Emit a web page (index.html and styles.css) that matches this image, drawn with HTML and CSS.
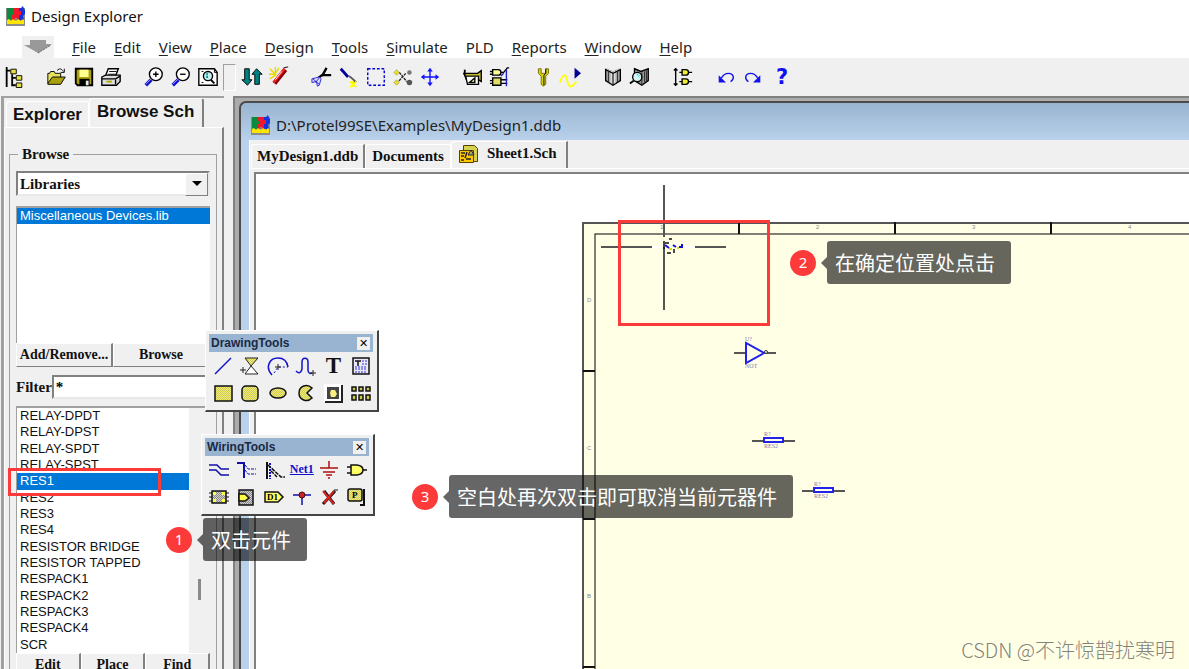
FILE: index.html
```
<!DOCTYPE html>
<html lang="zh-CN">

<head>
    <meta charset="UTF-8">
    <meta name="viewport" content="width=device-width, initial-scale=1.0">
    <title>Design Explorer</title>
    <link rel="stylesheet" href="styles.css">
</head>

<body>

    <!-- shared shapes -->
    <svg class="defs" aria-hidden="true">
        <pattern id="dither" width="2" height="2" patternUnits="userSpaceOnUse">
            <rect width="2" height="2" fill="#f2ee60" />
            <rect width="1" height="1" fill="#ccc870" />
            <rect x="1" y="1" width="1" height="1" fill="#ccc870" />
        </pattern>
        <pattern id="greydither" width="2" height="2" patternUnits="userSpaceOnUse">
            <rect width="2" height="2" fill="#d0d0d0" />
            <rect width="1" height="1" fill="#888" />
            <rect x="1" y="1" width="1" height="1" fill="#888" />
        </pattern>
        <symbol id="puzzle" viewBox="0 0 20 20">
            <path fill="#8c8c8c" d="M0 2h19v18H0z" />
            <path fill="#0a8a3c" d="M1 2h6v4h2v3H7v5H1z" />
            <path fill="#f01828" d="M7 2h6v3h2v4h-2v5h-2v-2H9v2H6V9h2V6H7z" />
            <path fill="#1432e0" d="M13 2h2l2-2 1 3 1 1v4l-2 2 1 4h-5V9h2V5h-2z" />
            <path fill="#ffe600" d="M1 18v-4l2-1 2 2 2-2 3 2 2-2 3 2 2-2 1 1v4z" />
        </symbol>
    </svg>

    <div class="app">
        <header class="titlebar">
            <svg class="logo"><use href="#puzzle" /></svg>
            <span>Design Explorer</span>
        </header>

        <nav class="menubar">
            <button class="menu-arrow" aria-label="System menu">
                <svg width="28" height="14" viewBox="0 0 28 14"><path fill="#999" d="M6 0h16v4h6L14 13 0 5h6z" /><path d="M14 13L27 5" stroke="#555" stroke-dasharray="2 1" /></svg>
            </button>
            <button><u>F</u>ile</button>
            <button><u>E</u>dit</button>
            <button><u>V</u>iew</button>
            <button><u>P</u>lace</button>
            <button><u>D</u>esign</button>
            <button><u>T</u>ools</button>
            <button><u>S</u>imulate</button>
            <button>PLD</button>
            <button><u>R</u>eports</button>
            <button><u>W</u>indow</button>
            <button><u>H</u>elp</button>
        </nav>

        <div class="toolbar">
            <div class="group">
                <button aria-label="Panel"><svg viewBox="0 0 24 24"><path d="M4 1v22M4 5h4M10 9v12h4M10 13h4" fill="none" stroke="#000" stroke-width="2" /><path fill="#e8e040" stroke="#000" d="M8.500 3.500h6v5h-6zM14.500 10.500h6v5h-6zM14.500 18.500h6v5h-6z" /></svg></button>
            </div>
            <div class="group">
                <button aria-label="Open"><svg viewBox="0 0 24 24"><path fill="#e8e060" stroke="#000" d="M2 19V8h2l1-2h4l1 2h6v4" /><path fill="#a8a010" stroke="#000" d="M2 19l5-7h14l-5 8H2z" /><path fill="none" stroke="#000" d="M12 5c3-3 5-2 7 1M20 3v4h-4" /></svg></button>
                <button aria-label="Save"><svg viewBox="0 0 24 24"><path fill="#a8a010" stroke="#000" stroke-width="2" d="M3 3h18v18H5l-2-2z" /><path fill="#ffff90" d="M7 4h10v8H7z" /><path d="M7 14h11v7H7z" /><path fill="#eee" d="M14 16h3v5h-3z" /></svg></button>
                <button aria-label="Print"><svg viewBox="0 0 24 24"><path fill="#fff" stroke="#000" stroke-width="1.500" d="M6 11l3-8h11l-3 8" /><path d="M10 6h8M9 9h8" stroke="#000" /><path fill="#ddd" stroke="#000" stroke-width="1.500" d="M2 12l4-2h16v7l-4 4H2z" /><path d="M2 14h15l5-3M17 15v5" fill="none" stroke="#000" stroke-width="1.500" /><path d="M7 17h6" stroke="#b0a800" stroke-width="2" /></svg></button>
            </div>
            <div class="group">
                <button aria-label="Zoom in"><svg viewBox="0 0 24 24"><circle cx="14" cy="9" r="7" fill="#fff" stroke="#000" stroke-width="1.500" /><path d="M11 9h6M14 6v6" stroke="#000" stroke-width="1.500" /><path d="M9 15l-6 6" stroke="#1010d0" stroke-width="4" /><path d="M9 14l-6 6" stroke="#aaf" /></svg></button>
                <button aria-label="Zoom out"><svg viewBox="0 0 24 24"><circle cx="14" cy="9" r="7" fill="#fff" stroke="#000" stroke-width="1.500" /><path d="M11 9h6" stroke="#000" stroke-width="1.500" /><path d="M9 15l-6 6" stroke="#1010d0" stroke-width="4" /><path d="M9 14l-6 6" stroke="#aaf" /></svg></button>
                <button aria-label="Fit document"><svg viewBox="0 0 24 24"><path fill="#fff" stroke="#000" stroke-width="1.500" d="M2 3h17l3 4v14H2z" /><path d="M19 3v4h3M5 6h2M5 18h2" fill="none" stroke="#000" /><circle cx="12" cy="11" r="5" fill="#c8eeee" stroke="#000" stroke-width="1.500" /><path d="M10 9h2M10 12h2" stroke="#099" stroke-width="2" /><path d="M15 15l4 4" stroke="#000" stroke-width="2" /></svg></button>
            </div>
            <span class="dock"></span>
            <div class="group">
                <button aria-label="Up down hierarchy"><svg viewBox="0 0 24 24"><path fill="#008080" stroke="#000" d="M4 3h5v12h3l-5 6-6-6h3zM15 20h5V9h3l-6-6-5 6h3z" /></svg></button>
                <button aria-label="Cross probe"><svg viewBox="0 0 24 24"><path d="M7 19L19 4" stroke="#800" stroke-width="5" /><path d="M6 18L18 3" stroke="#e22" stroke-width="3" /><path d="M8 15l7-9" stroke="#fff" /><path d="M17 2l5-1" stroke="#000" /><path d="M2 3l7 7M8 1v7M1 9h7M2 14l6-4M12 2l-4 6" stroke="#e8d800" stroke-width="1.500" /></svg></button>
            </div>
            <div class="group">
                <button aria-label="Cut"><svg viewBox="0 0 24 24"><path d="M17 2l-5 9M22 10H12L8 13" fill="none" stroke="#000" stroke-width="2.500" /><path fill="#dde" stroke="#22d" d="M1 14l8-2 2 2-2 7-2 1-1-5-5 1zM2 14l7 6M9 13l-4 5" /></svg></button>
                <button aria-label="Paste"><svg viewBox="0 0 24 24"><path d="M3 3l8 9" stroke="#009" stroke-width="3" /><path d="M12 11l4 3 3 3-3 2" fill="none" stroke="#555" stroke-width="2" /><path d="M13 17l7 6M20 17l-7 6M16 16v7" stroke="#ff0" stroke-width="2" /></svg></button>
                <button aria-label="Select inside area"><svg viewBox="0 0 24 24"><path fill="none" stroke="#00c" stroke-width="1.500" stroke-dasharray="3 2" d="M3 3h18v18H3z" /></svg></button>
                <button aria-label="Deselect"><svg viewBox="0 0 24 24"><path d="M8 7l8 10M15 8l-8 9" stroke="#222" stroke-width="1.500" stroke-dasharray="3 1" /><path fill="#e8e020" stroke="#776" stroke-width=".500" d="M2 7l3-3 3 3-3 3zM2 18l3-3 3 3-3 3z" /><circle cx="19" cy="7" r="2.500" fill="#777" /><circle cx="19" cy="18" r="3" fill="#555" /></svg></button>
                <button aria-label="Move"><svg viewBox="0 0 24 24"><path d="M12 4v16M4 12h16" stroke="#11f" stroke-width="1.500" /><path fill="#11f" d="M12 2l3 4H9zM12 22l3-4H9zM2 12l4-3v6zM22 12l-4-3v6z" /></svg></button>
            </div>
            <div class="group">
                <button aria-label="Drawing tools"><svg viewBox="0 0 24 24"><path fill="#c8c030" stroke="#000" stroke-width="1.500" d="M2 8h15l4-3v12l-3-2H5z" /><path fill="#fff" stroke="#000" stroke-width="1.500" d="M4 11h14v9H6z" /><path d="M3 4v6" stroke="#000" stroke-width="2" /><path d="M8 18l6-5v5z" fill="#ff6" stroke="#000" stroke-width="1.500" /></svg></button>
                <button aria-label="Wiring tools"><svg viewBox="0 0 24 24"><path d="M1 6h4M1 9h4M1 16h4M1 19h4M12 7h4l4-5h2M12 15h8M12 19h8" fill="none" stroke="#000" stroke-width="1.500" /><path d="M19 4v18M16 8l-3 3" stroke="#22c" stroke-width="1.500" /><path fill="#ff9" stroke="#000" stroke-width="1.500" d="M4 4h6c4 0 4 6 0 6H4z" /><path fill="url(#dither)" stroke="#000" stroke-width="1.500" d="M4 13h9v8H4z" /></svg></button>
            </div>
            <div class="group">
                <button aria-label="Setup"><svg viewBox="0 0 24 24"><path fill="#d8d000" stroke="#777000" d="M7 3v5l3 3v9l2 2 3-2v-9l3-3V3h-3v5h-5V3z" /><path d="M15 3v5l-2 2v11" fill="none" stroke="#000" /></svg></button>
                <button aria-label="Simulate"><svg viewBox="0 0 24 24"><path fill="none" stroke="#ff0" stroke-width="2" d="M1 18c4-12 7-8 8-2s4 10 10 1" /><path fill="#009" d="M17 2l7 6-7 6z" /></svg></button>
            </div>
            <div class="group">
                <button aria-label="Add library"><svg viewBox="0 0 24 24"><path fill="#aaa" stroke="#000" stroke-width="1.500" d="M4 4l8 4 8-4v12l-8 5-8-5z" /><path d="M7 6v12M12 8v13M17 6v12" stroke="#222" /><path d="M10 8v11M14 8v11" stroke="#fff" /><path d="M5 3l7 3 7-3" stroke="#777" fill="none" stroke-dasharray="1 1" /></svg></button>
                <button aria-label="Browse library"><svg viewBox="0 0 24 24"><path fill="#999" stroke="#000" stroke-width="1.500" d="M6 3l7 3 8-3v13l-7 5-8-5z" /><path d="M14 7v14M17 6v12M19 5v12" stroke="#222" /><circle cx="9" cy="12" r="5" fill="#d8f4f4" stroke="#000" stroke-width="1.500" /><path d="M5 16l-4 3" stroke="#000" stroke-width="2" /><path d="M9 9l3 3" stroke="#0cc" stroke-width="2" stroke-dasharray="1 1" /></svg></button>
            </div>
            <div class="group">
                <button aria-label="Increment part"><svg viewBox="0 0 24 24"><path d="M4 4v16M2 5l2-2 2 2M2 19l2 2 2-2M8 7h14M8 17h14" fill="none" stroke="#000" stroke-width="1.500" /><path fill="#ee3" stroke="#000" stroke-width="1.500" d="M11 4h4c4 0 4 6 0 6h-4zM11 14h4c4 0 4 6 0 6h-4z" /></svg></button>
            </div>
            <div class="group">
                <button aria-label="Undo"><svg viewBox="0 0 24 24"><path fill="none" stroke="#11e" stroke-width="1.500" d="M7 13c4-7 12-6 13-1 0 3-1 4-3 5" /><path fill="#11e" d="M4 10v8h8z" /></svg></button>
                <button aria-label="Redo"><svg viewBox="0 0 24 24"><path fill="none" stroke="#11e" stroke-width="1.500" d="M17 13C13 6 5 7 4 12c0 3 1 4 3 5" /><path fill="#11e" d="M20 10v8h-8z" /></svg></button>
                <button class="help" aria-label="Help">?</button>
            </div>
        </div>

        <main class="main">
            <aside class="sidebar">
                <div class="side-tabs">
                    <button>Explorer</button>
                    <button class="active">Browse Sch</button>
                </div>
                <div class="panel">
                    <fieldset>
                        <legend>Browse</legend>
                        <div class="combo">
                            <select aria-label="Browse">
                                <option>Libraries</option>
                            </select>
                        </div>
                        <ul class="listbox libraries">
                            <li class="selected">Miscellaneous Devices.lib</li>
                        </ul>
                        <div class="btn-row">
                            <button>Add/Remove...</button>
                            <button>Browse</button>
                        </div>
                        <div class="filter">
                            <label for="filter">Filter</label>
                            <input type="text" id="filter" value="*">
                        </div>
                        <div class="listbox parts">
                            <ul>
                                <li>RELAY-DPDT</li>
                                <li>RELAY-DPST</li>
                                <li>RELAY-SPDT</li>
                                <li>RELAY-SPST</li>
                                <li class="selected">RES1</li>
                                <li>RES2</li>
                                <li>RES3</li>
                                <li>RES4</li>
                                <li>RESISTOR BRIDGE</li>
                                <li>RESISTOR TAPPED</li>
                                <li>RESPACK1</li>
                                <li>RESPACK2</li>
                                <li>RESPACK3</li>
                                <li>RESPACK4</li>
                                <li>SCR</li>
                            </ul>
                            <div class="scroll"><span></span></div>
                        </div>
                        <div class="btn-row">
                            <button>Edit</button>
                            <button>Place</button>
                            <button>Find</button>
                        </div>
                    </fieldset>
                </div>
            </aside>

            <section class="mdi">
                <div class="child">
                    <div class="child-title">
                        <svg class="logo"><use href="#puzzle" /></svg>
                        <span>D:\Protel99SE\Examples\MyDesign1.ddb</span>
                    </div>
                    <div class="child-body">
                        <div class="doc-tabs">
                            <button>MyDesign1.ddb</button>
                            <button>Documents</button>
                            <button class="active">
                                <svg width="20" height="20" viewBox="0 0 20 20"><path fill="#d8d050" stroke="#554400" d="M4.500 1.500h11l3 3v13h-14z" /><path fill="#ffc800" stroke="#554400" d="M.500 6.500h14v12H.500z" /><path d="M2 9h4M2 12h3M7 15h5M2 16h3M8 8l-2 6" stroke="#222" stroke-width="1.500" /><path d="M9 11l3-5 3 5z" fill="#a8a878" stroke="#222" /></svg>
                                Sheet1.Sch
                            </button>
                        </div>
                        <div class="canvas">
                            <svg class="schematic" width="100%" height="100%">
                                <!-- sheet border -->
                                <rect x="327" y="49" width="3000" height="3000" fill="#ffffe6" stroke="#555" stroke-width="2" />
                                <rect x="339" y="60" width="3000" height="3000" fill="none" stroke="#000" stroke-width="1" />
                                <path class="ink" d="M483 48v12M639 48v12M795 48v12M327 197h12M327 345h12M327 493h12" />
                                <g class="ref">
                                    <text x="404" y="55">1</text>
                                    <text x="560" y="55">2</text>
                                    <text x="716" y="55">3</text>
                                    <text x="872" y="55">4</text>
                                    <text x="331" y="128">D</text>
                                    <text x="331" y="276">C</text>
                                    <text x="331" y="424">B</text>
                                </g>
                                <!-- placement cursor -->
                                <path class="ink soft" d="M408 11v52M408 73v63M345 73h51M439 73h31" />
                                <path d="M396 73h10M427 73h12" stroke="#fff" stroke-width="2" />
                                <path d="M408 67v8M409 69h4M413 65h3M411 79h4M418 75v4" stroke="#111" stroke-width="1.500" />
                                <path d="M409 71l4 3M417 71l3 2M423 73h4M426 70v4" stroke="#11d" stroke-width="2" />
                                <path d="M413 75h3M421 74h2" stroke="#dd0" stroke-width="2" />
                                <!-- NOT gate -->
                                <path class="ink soft" d="M478 179h12M511 179h9" />
                                <path class="part" d="M490 169v20l18-10z" />
                                <circle cx="510" cy="178" r="1.500" fill="none" stroke="#333" />
                                <g class="tag">
                                    <text x="489" y="167">U?</text>
                                    <text x="489" y="194">NOT</text>
                                </g>
                                <!-- resistors -->
                                <path class="ink soft" d="M496 267h12M527 267h12M546 317h12M577 317h12" />
                                <rect class="part" x="508" y="264" width="19" height="4" />
                                <rect class="part" x="558" y="314" width="19" height="4" />
                                <g class="tag">
                                    <text x="508" y="262">R?</text>
                                    <text x="508" y="274">RES2</text>
                                    <text x="558" y="312">R?</text>
                                    <text x="558" y="324">RES2</text>
                                </g>
                            </svg>
                        </div>
                    </div>
                </div>
            </section>
        </main>

        <!-- floating palettes -->
        <div class="palette drawing">
            <div class="palette-title">DrawingTools <button aria-label="Close">✕</button></div>
            <div class="palette-grid">
                <button aria-label="Line"><svg viewBox="0 0 22 22"><path d="M3 19L19 3" stroke="#11c" stroke-width="1.500" /></svg></button>
                <button aria-label="Polygon"><svg viewBox="0 0 22 22"><path fill="#fff" stroke="#222" d="M6 19l6-8 7 8z" /><path fill="url(#dither)" stroke="#222" d="M6 3h13l-7 8z" /><path d="M1 15h6M4 12v6" stroke="#222" /></svg></button>
                <button aria-label="Arc"><svg viewBox="0 0 22 22"><path fill="none" stroke="#11c" stroke-width="1.500" d="M5 20C-2 13 2 3 11 3c5 0 9 3 10 9" /><path d="M7 18l4-6h10" fill="none" stroke="#11c" stroke-dasharray="2 2" /><path d="M8 12h6M11 9v6" stroke="#222" /></svg></button>
                <button aria-label="Bezier"><svg viewBox="0 0 22 22"><path fill="none" stroke="#11c" stroke-width="1.500" d="M1 16c3 3 5 2 6-2V7c0-5 6-5 6 0v8c0 3 2 4 4 3" /><path d="M15 18h6M18 15v6" stroke="#222" /></svg></button>
                <button class="letter" aria-label="Text">T</button>
                <button aria-label="Text frame"><svg viewBox="0 0 22 22"><path fill="#e8e8f8" stroke="#111" stroke-width="1.500" d="M3 3h16v16H3z" /><path d="M12 6h5M12 9h5M5 12h12M5 14h12M5 17h12" stroke="#33c" stroke-dasharray="2 1" /><path d="M5 6h6M8 6v5" stroke="#111" stroke-width="1.500" /></svg></button>
                <button aria-label="Rectangle"><svg viewBox="0 0 22 22"><rect x="3" y="4" width="17" height="15" fill="url(#dither)" stroke="#111" stroke-width="1.500" /></svg></button>
                <button aria-label="Round rectangle"><svg viewBox="0 0 22 22"><rect x="3" y="4" width="16" height="15" rx="4" fill="url(#dither)" stroke="#111" stroke-width="1.500" /></svg></button>
                <button aria-label="Ellipse"><svg viewBox="0 0 22 22"><ellipse cx="11" cy="11" rx="8" ry="5" fill="url(#dither)" stroke="#111" stroke-width="1.500" /></svg></button>
                <button aria-label="Pie"><svg viewBox="0 0 22 22"><path fill="url(#dither)" stroke="#111" stroke-width="1.500" d="M17 6C12 1 4 4 4 11s8 10 13 5l-5-5z" /></svg></button>
                <button aria-label="Picture"><svg viewBox="0 0 22 22"><path fill="#fff" d="M2 2h18v18H2z" /><path d="M20 3v17H3" fill="none" stroke="#222" stroke-width="2" /><path fill="#444" d="M5 5h12v12H5z" /><path fill="#f8f080" d="M9 8h4l2 4-2 3H9l-1-4z" /></svg></button>
                <button aria-label="Array"><svg viewBox="0 0 22 22"><path fill="#cc4" stroke="#111" stroke-width="1.500" d="M2 5h4v4H2zM9 5h4v4H9zM16 5h4v4h-4zM2 13h4v5H2zM9 13h4v5H9zM16 13h4v5h-4z" /></svg></button>
            </div>
        </div>

        <div class="palette wiring">
            <div class="palette-title">WiringTools <button aria-label="Close">✕</button></div>
            <div class="palette-grid">
                <button aria-label="Wire"><svg viewBox="0 0 22 22"><path fill="none" stroke="#11a" stroke-width="1.500" d="M1 6h8l4 4h8M1 11h7l5 5h8" /></svg></button>
                <button aria-label="Bus"><svg viewBox="0 0 22 22"><path fill="none" stroke="#11a" stroke-width="2" d="M2 4h7v15" /><path fill="none" stroke="#11a" stroke-dasharray="3 1" d="M10 6l3 4h8M10 11l3 4h8" /></svg></button>
                <button aria-label="Bus entry"><svg viewBox="0 0 22 22"><path d="M4 3v17" stroke="#111" stroke-width="2" /><path d="M7 4v16" stroke="#11c" stroke-width="2" stroke-dasharray="2 1" /><path d="M5 6l13 12h4M8 12l6 6" fill="none" stroke="#111" stroke-width="1.500" stroke-dasharray="4 1" /></svg></button>
                <button class="net" aria-label="Net label">Net1</button>
                <button aria-label="Power port"><svg viewBox="0 0 22 22"><path fill="none" stroke="#a11" stroke-width="1.500" d="M11 2v7M2 9h18M5 13h12M8 16h6M10 19h2" /></svg></button>
                <button aria-label="Part"><svg viewBox="0 0 22 22"><path d="M1 8h5M1 14h5M15 11h6" stroke="#111" stroke-width="1.500" /><path fill="#ff6" stroke="#111" stroke-width="1.500" d="M5 6h6c8 1 8 9 0 10H5z" /></svg></button>
                <button aria-label="Sheet symbol"><svg viewBox="0 0 22 22"><path d="M1 7h20M1 11h20M1 15h20" stroke="#111" /><path fill="url(#greydither)" stroke="#111" stroke-width="1.500" d="M4 5h14v12H4z" /><path fill="#ff4" d="M5 6h3v3H5zM14 6h3v3h-3zM5 13h3v3H5zM14 13h3v3h-3z" /></svg></button>
                <button aria-label="Sheet entry"><svg viewBox="0 0 22 22"><path fill="url(#greydither)" stroke="#111" stroke-width="1.500" d="M4 4h14v15H4z" /><path fill="#ff4" stroke="#111" stroke-width="1.500" d="M4 8h6l4 4-4 3H4z" /></svg></button>
                <button aria-label="Port"><svg viewBox="0 0 22 22"><path fill="#ff6" stroke="#111" stroke-width="1.500" d="M2 6h13l5 5-5 5H2z" /><text class="port-text" x="4" y="14">D1</text></svg></button>
                <button aria-label="Junction"><svg viewBox="0 0 22 22"><path d="M2 9h18M11 9v10" stroke="#11a" stroke-width="1.500" /><circle cx="11" cy="9" r="3" fill="#c22" stroke="#411" /></svg></button>
                <button aria-label="No ERC"><svg viewBox="0 0 22 22"><path d="M6 5l10 13M17 5L5 18" stroke="#111" stroke-width="3" /><path d="M5 5l11 13M16 5L6 17" stroke="#d22" stroke-width="2" /><path d="M16 4h4" stroke="#111" /></svg></button>
                <button aria-label="PCB directive"><svg viewBox="0 0 22 22"><path d="M18 3v16h-4" fill="none" stroke="#111" stroke-width="2" /><rect x="2" y="3" width="14" height="12" rx="2" fill="url(#dither)" stroke="#111" stroke-width="1.500" /><text class="port-text" x="6" y="12">P</text></svg></button>
            </div>
        </div>

        <!-- tutorial notes -->
        <div class="mark mark-part"></div>
        <div class="mark mark-place"></div>
        <div class="note note1"><span class="num">1</span><span class="tip">双击元件</span></div>
        <div class="note note2"><span class="num">2</span><span class="tip">在确定位置处点击</span></div>
        <div class="note note3"><span class="num">3</span><span class="tip">空白处再次双击即可取消当前元器件</span></div>
        <div class="watermark">CSDN @不许惊鹊扰寒明</div>
    </div>

</body>

</html>
```
FILE: styles.css
```
* {
    box-sizing: border-box;
}

body {
    margin: 0;
    background: #f0f0f0;
    font-family: "Noto Sans", "Noto Sans CJK SC", sans-serif;
    color: #111;
}

button {
    margin: 0;
    padding: 0;
    border: none;
    background: none;
    font: inherit;
    color: inherit;
    white-space: nowrap;
}

ul {
    list-style: none;
    margin: 0;
    padding: 0;
}

.defs {
    position: absolute;
    width: 0;
    height: 0;
}

.app {
    position: relative;
    display: flex;
    flex-direction: column;
    height: 100vh;
    overflow: hidden;
}

.logo {
    width: 20px;
    height: 20px;
    flex: none;
}

/* title, menu, toolbar */
.titlebar {
    display: flex;
    align-items: center;
    gap: 5px;
    height: 31px;
    padding-left: 6px;
    background: #fff;
    font-size: 15px;
    flex: none;
}

.menubar {
    display: flex;
    align-items: center;
    gap: 18px;
    height: 27px;
    padding: 4px 0 0 22px;
    background: #fff;
    color: #222;
    font-size: 15px;
    line-height: 22px;
    flex: none;
}

.menubar u {
    text-underline-offset: 2px;
}

.menu-arrow {
    display: flex;
    align-items: center;
    justify-content: center;
    width: 32px;
    height: 22px;
    background: #f0f0f0;
}

.toolbar {
    display: flex;
    align-items: center;
    gap: 16px;
    height: 38px;
    flex: none;
}

.toolbar .group {
    display: flex;
}

.toolbar button {
    display: flex;
    align-items: center;
    justify-content: center;
    width: 27px;
    height: 28px;
}

.toolbar svg {
    width: 22px;
    height: 22px;
}

.toolbar .help {
    width: 32px;
    font: bold 21px "DejaVu Sans", sans-serif;
    color: #11e;
}

.dock {
    width: 13px;
    height: 27px;
    margin: 0 -14px;
    border-top: 1px solid #a0a0a0;
    border-left: 1px solid #a0a0a0;
    border-right: 1px solid #fff;
    border-bottom: 1px solid #fff;
}

.main {
    display: flex;
    flex: 1;
    min-height: 0;
}

/* left panel */
.sidebar {
    display: flex;
    flex-direction: column;
    width: 223px;
    margin: 0 9px 0 1px;
    border-top: 2px solid #a0a0a0;
    border-left: 3px solid #a0a0a0;
    flex: none;
}

.side-tabs {
    display: flex;
    align-items: flex-end;
    height: 29px;
    padding-left: 2px;
    font: bold 17px "Liberation Sans", sans-serif;
    flex: none;
}

.side-tabs button {
    height: 26px;
    padding: 0 6px;
    border: 1px solid #fff;
    border-bottom: none;
    border-radius: 3px 3px 0 0;
}

.side-tabs .active {
    height: 29px;
    padding: 0 8px 2px 7px;
    border-right: 2px solid #808080;
}

.panel {
    flex: 1;
    min-height: 0;
    padding: 18px 5px 0 4px;
    border-top: 1px solid #fff;
    border-left: 1px solid #fff;
    border-right: 2px solid #808080;
    font: bold 15px "Liberation Serif", serif;
}

fieldset {
    margin: 0;
    padding: 9px 6px 0 6px;
    border: 1px solid #a0a0a0;
    border-bottom: none;
    min-width: 0;
}

legend {
    margin-left: 2px;
    padding: 0 4px;
    line-height: 16px;
}

.combo {
    position: relative;
    border: 2px solid;
    border-color: #808080 #e8e8e8 #e8e8e8 #808080;
    background: #fff;
}

.combo select {
    display: block;
    appearance: none;
    width: 100%;
    height: 21px;
    padding: 0 2px;
    border: none;
    background: none;
    font: inherit;
    color: inherit;
}

.combo::before {
    content: "";
    position: absolute;
    top: 0;
    right: 0;
    width: 21px;
    height: 21px;
    border: 1px solid;
    border-color: #fff #808080 #808080 #fff;
    background: #f0f0f0;
}

.combo::after {
    content: "";
    position: absolute;
    top: 8px;
    right: 6px;
    border: 5px solid transparent;
    border-top-color: #000;
    border-bottom: none;
}

.listbox {
    background: #fff;
    border-top: 2px solid #a0a0a0;
    border-left: 1px solid #a0a0a0;
    font: 13px/16px "Liberation Sans", sans-serif;
}

.listbox li {
    padding-left: 3px;
    overflow: hidden;
}

.listbox .selected {
    background: #0078d7;
    color: #fff;
}

.libraries {
    height: 137px;
    margin-top: 10px;
}

.btn-row {
    display: flex;
}

.btn-row button {
    flex: 1 1 0;
    height: 24px;
    padding: 0 1px;
    border: 1px solid;
    border-color: #fff #808080 #808080 #fff;
    border-right-width: 2px;
    font-size: 14px;
}

.filter {
    display: flex;
    align-items: center;
    margin: 8px 0 7px;
}

.filter input {
    flex: 1;
    min-width: 0;
    height: 24px;
    padding: 0 2px;
    border: 2px solid;
    border-color: #808080 #e8e8e8 #e8e8e8 #808080;
    background: #fff;
    font: inherit;
}

.parts {
    display: flex;
    height: 247px;
}

.parts ul {
    display: grid;
    grid-auto-rows: 1fr;
    flex: 1;
}

.parts .scroll {
    width: 21px;
    padding: 171px 0 0 9px;
    background: #f0f0f0;
}

.parts .scroll span {
    display: block;
    width: 3px;
    height: 21px;
    background: #8a8a8a;
}

/* document window */
.mdi {
    display: flex;
    flex: 1;
    min-width: 0;
    padding: 3px 0 0 4px;
    border-top: 2px solid #808080;
    border-left: 2px solid #808080;
    background: #ababab;
}

.child {
    display: flex;
    flex-direction: column;
    flex: 1;
    min-width: 0;
    padding-left: 8px;
    border-top: 2px solid #4a4a4a;
    border-left: 2px solid #4a4a4a;
    border-radius: 7px 0 0 0;
    background: linear-gradient(#99b4d1, #b9d1ea 37px);
}

.child-title {
    display: flex;
    align-items: center;
    gap: 5px;
    height: 37px;
    padding: 7px 0 0 2px;
    color: #222;
    font-size: 15px;
    flex: none;
}

.child-body {
    display: flex;
    flex-direction: column;
    flex: 1;
    min-height: 0;
    padding: 2px 0 0 4px;
    border-left: 1px solid #fff;
    background: #f0f0f0;
}

.doc-tabs {
    display: flex;
    align-items: flex-end;
    height: 27px;
    margin: 0 0 3px -3px;
    border-bottom: 1px solid #fff;
    font: bold 15px "Liberation Serif", serif;
    flex: none;
}

.doc-tabs button {
    height: 24px;
    padding: 0 5px;
    border-top: 1px solid #fff;
    border-left: 1px solid #fff;
    border-right: 2px solid #808080;
    border-radius: 3px 0 0 0;
}

.doc-tabs button:nth-child(2) {
    padding: 0 6px;
    border-right: 1px solid #fff;
}

.doc-tabs .active {
    display: flex;
    align-items: center;
    gap: 8px;
    height: 27px;
    padding: 0 9px 3px 7px;
}

.canvas {
    flex: 1;
    min-height: 0;
    border-top: 2px solid #808080;
    border-left: 2px solid #808080;
    background: #fff;
    overflow: hidden;
}

.schematic {
    display: block;
}

.ink {
    fill: none;
    stroke: #111;
    stroke-width: 2px;
    shape-rendering: crispEdges;
}

.soft {
    stroke: #555;
}

.part {
    fill: none;
    stroke: #2222ee;
    stroke-width: 2px;
}

.ref {
    font: 6px "Liberation Sans", sans-serif;
    fill: #888;
}

.tag {
    font: 6px "Liberation Serif", serif;
    fill: #8080b0;
}

/* palettes */
.palette {
    position: absolute;
    width: 174px;
    padding: 3px 2px 4px 3px;
    background: #f0f0f0;
    border: 1px solid;
    border-color: #fff #444 #444 #fff;
    border-right-width: 2px;
    border-bottom-width: 2px;
}

.drawing {
    left: 205px;
    top: 330px;
}

.wiring {
    left: 201px;
    top: 434px;
}

.palette-title {
    display: flex;
    align-items: center;
    justify-content: space-between;
    height: 18px;
    margin-right: 2px;
    padding: 0 3px 0 2px;
    background: #99b4d1;
    font: bold 12px "Liberation Sans", sans-serif;
    color: #1a2a44;
}

.palette-title button {
    width: 13px;
    height: 13px;
    background: #f0f0f0;
    font: bold 11px/13px "DejaVu Sans", sans-serif;
    color: #000;
}

.palette-grid {
    display: grid;
    grid-template-columns: repeat(6, 1fr);
    grid-auto-rows: 27px;
}

.palette-grid button {
    display: flex;
    align-items: center;
    justify-content: center;
    min-width: 0;
}

.palette-grid svg {
    width: 22px;
    height: 22px;
}

.palette-grid .letter {
    font: bold 23px "Liberation Serif", serif;
}

.palette-grid .net {
    font: bold 12px "Liberation Serif", serif;
    color: #1111cc;
    text-decoration: underline;
}

.port-text {
    font: bold 9px "Liberation Serif", serif;
}

/* notes */
.mark {
    position: absolute;
    border: 3px solid #fc3a3a;
}

.mark-part {
    left: 8px;
    top: 468px;
    width: 153px;
    height: 28px;
}

.mark-place {
    left: 618px;
    top: 220px;
    width: 152px;
    height: 106px;
}

.note {
    position: absolute;
    display: flex;
    align-items: center;
    gap: 11px;
    color: #fff;
}

.note1 {
    left: 166px;
    top: 518px;
}

.note2 {
    left: 790px;
    top: 241px;
}

.note3 {
    left: 412px;
    top: 475px;
}

.num {
    width: 26px;
    height: 26px;
    border-radius: 50%;
    background: #fc3a3a;
    font-size: 15px;
    line-height: 24px;
    text-align: center;
}

.tip {
    position: relative;
    padding: 0 16px 0 8px;
    border-radius: 3px;
    background: rgba(0, 0, 0, 0.6);
    font: 20px/43px "Noto Sans CJK SC", sans-serif;
    white-space: nowrap;
}

.tip::before {
    content: "";
    position: absolute;
    left: -6px;
    top: 16px;
    border: 6px solid transparent;
    border-right-color: rgba(0, 0, 0, 0.6);
    border-left: none;
}

.watermark {
    position: absolute;
    right: 14px;
    bottom: 4px;
    font: 300 20px/30px "Noto Sans CJK SC", sans-serif;
    color: #84847c;
}
```
